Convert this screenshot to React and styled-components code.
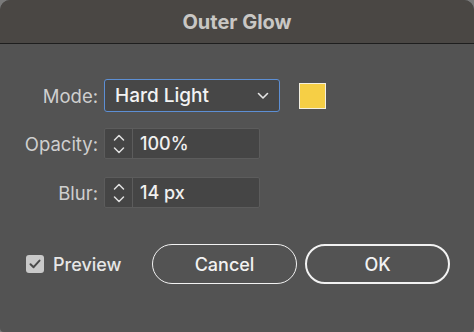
import React, { useState } from 'react';
import styled, { createGlobalStyle } from 'styled-components';

const GlobalStyle = createGlobalStyle`
  html, body {
    margin: 0;
    padding: 0;
    background: #7a7a7a;
  }
  body {
    font-family: Inter, "Open Sans", "Liberation Sans", sans-serif;
  }
`;

const Dialog = styled.div`
  width: 474px;
  height: 332px;
  background: #535353;
  border-radius: 10px 10px 4px 4px;
  overflow: hidden;
  display: flex;
  flex-direction: column;
`;

const TitleBar = styled.div`
  height: 43px;
  background: #4a4744;
  border-bottom: 1px solid #1e1e1e;
  display: flex;
  align-items: center;
  justify-content: center;
  color: #c9c7c4;
  font-size: 20px;
  font-weight: 700;
`;

const Form = styled.div`
  display: grid;
  grid-template-columns: 98px auto;
  column-gap: 6px;
  align-items: center;
  padding-top: 35px;
`;

const Label = styled.label`
  text-align: right;
  color: #cfcfcf;
  font-size: 18.5px;
  margin-top: ${(p) => p.$top || 0}px;
`;

const Control = styled.div`
  display: flex;
  align-items: center;
  margin-top: ${(p) => p.$top || 0}px;
`;

const Select = styled.div`
  box-sizing: border-box;
  width: 176px;
  height: 33px;
  border: 1.5px solid #5d8fd4;
  border-radius: 3px;
  background: #474747;
  display: flex;
  align-items: center;
  justify-content: space-between;
  padding: 0 10px 0 10px;
  color: #f3f3f3;
  font-size: 19px;
  font-weight: 500;
`;

const Swatch = styled.div`
  box-sizing: border-box;
  width: 27px;
  height: 26px;
  margin-left: 19px;
  background: #f6cf45;
  border: 1.5px solid #f4f0e0;
`;

const NumberField = styled.div`
  box-sizing: border-box;
  width: 156px;
  height: 31px;
  display: flex;
  background: #454545;
  border: 1px solid #5c5c5c;
  border-radius: 2px;
`;

const Stepper = styled.div`
  width: 27px;
  border-right: 1px solid #5c5c5c;
  display: flex;
  align-items: center;
  justify-content: center;
`;

const Value = styled.div`
  display: flex;
  align-items: center;
  padding-left: 7px;
  color: #f0f0f0;
  font-size: 18px;
  font-weight: 500;
`;

const Footer = styled.div`
  display: flex;
  align-items: center;
  justify-content: space-between;
  padding: 0 24px 0 26px;
  margin-top: 36px;
`;

const CheckLabel = styled.label`
  display: flex;
  align-items: center;
  color: #e6e6e6;
  font-size: 18px;
  font-weight: 500;
`;

const CheckBox = styled.span`
  width: 18px;
  height: 18px;
  border-radius: 3px;
  background: #c9c9c9;
  display: flex;
  align-items: center;
  justify-content: center;
  margin-right: 9px;
`;

const Buttons = styled.div`
  display: flex;
  gap: 8px;
`;

const Button = styled.button`
  box-sizing: border-box;
  width: 145px;
  height: 40px;
  border-radius: 20px;
  background: transparent;
  border: ${(p) => (p.$primary ? '2.5px' : '1.5px')} solid #f2f2f2;
  color: #f2f2f2;
  font-family: inherit;
  font-size: 18px;
  font-weight: 500;
  cursor: pointer;
`;

const Chevron = () => (
  <svg width="12" height="8" viewBox="0 0 12 8">
    <path d="M1.5 1.5 L6 6 L10.5 1.5" fill="none" stroke="#e6e6e6" strokeWidth="1.6" strokeLinecap="round" strokeLinejoin="round" />
  </svg>
);

const Arrows = () => (
  <svg width="14" height="22" viewBox="0 0 14 22">
    <path d="M2.5 7 L7 2.5 L11.5 7" fill="none" stroke="#e0e0e0" strokeWidth="1.5" strokeLinecap="round" strokeLinejoin="round" />
    <path d="M2.5 15 L7 19.5 L11.5 15" fill="none" stroke="#e0e0e0" strokeWidth="1.5" strokeLinecap="round" strokeLinejoin="round" />
  </svg>
);

const Check = () => (
  <svg width="12" height="10" viewBox="0 0 12 10">
    <path d="M1.5 5.2 L4.6 8.2 L10.5 1.6" fill="none" stroke="#4a4a4a" strokeWidth="2" strokeLinecap="round" strokeLinejoin="round" />
  </svg>
);

function NumberInput({ value }) {
  return (
    <NumberField>
      <Stepper>
        <Arrows />
      </Stepper>
      <Value>{value}</Value>
    </NumberField>
  );
}

export default function App() {
  const [preview] = useState(true);

  return (
    <Dialog>
      <GlobalStyle />
      <TitleBar>Outer Glow</TitleBar>
      <Form>
        <Label>Mode:</Label>
        <Control>
          <Select>
            <span>Hard Light</span>
            <Chevron />
          </Select>
          <Swatch />
        </Control>

        <Label $top={16}>Opacity:</Label>
        <Control $top={16}>
          <NumberInput value="100%" />
        </Control>

        <Label $top={18}>Blur:</Label>
        <Control $top={18}>
          <NumberInput value="14 px" />
        </Control>
      </Form>
      <Footer>
        <CheckLabel>
          <CheckBox>{preview && <Check />}</CheckBox>
          Preview
        </CheckLabel>
        <Buttons>
          <Button>Cancel</Button>
          <Button $primary>OK</Button>
        </Buttons>
      </Footer>
    </Dialog>
  );
}
